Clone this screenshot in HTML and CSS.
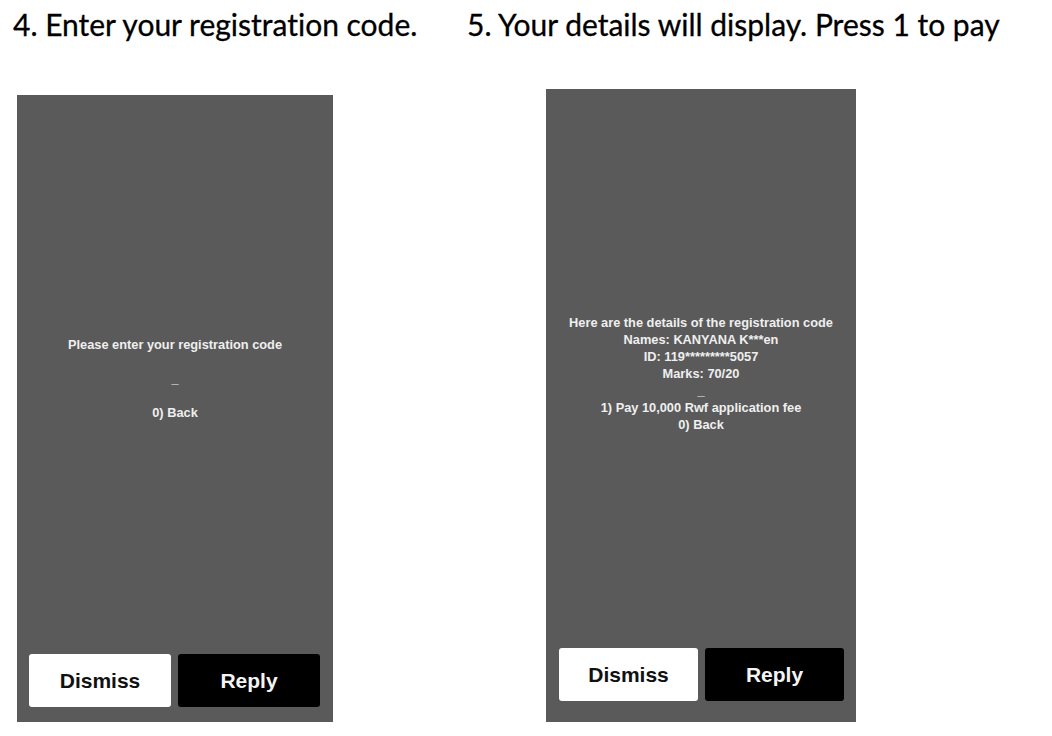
FILE: index.html
```html
<!DOCTYPE html>
<html>
<head>
<meta charset="utf-8">
<link rel="stylesheet" href="styles.css">
</head>
<body>
<div class="page">
  <div class="titles">
    <h1 class="title t1">4. Enter your registration code.</h1>
    <h1 class="title t2">5. Your details will display. Press 1 to pay</h1>
  </div>
  <div class="phones">
    <div class="phone phone-left">
      <div class="msg msg-left">
        <p>Please enter your registration code</p>
        <p>&nbsp;</p>
        <p>_</p>
        <p>&nbsp;</p>
        <p>0) Back</p>
      </div>
      <div class="actions actions-left">
        <button class="btn btn-dismiss">Dismiss</button>
        <button class="btn btn-reply">Reply</button>
      </div>
    </div>
    <div class="phone phone-right">
      <div class="msg msg-right">
        <p>Here are the details of the registration code</p>
        <p>Names: KANYANA K***en</p>
        <p>ID: 119*********5057</p>
        <p>Marks: 70/20</p>
        <p>_</p>
        <p>1) Pay 10,000 Rwf application fee</p>
        <p>0) Back</p>
      </div>
      <div class="actions actions-right">
        <button class="btn btn-dismiss">Dismiss</button>
        <button class="btn btn-reply">Reply</button>
      </div>
    </div>
  </div>
</div>
</body>
</html>
```

FILE: styles.css
```css
html, body {
  margin: 0;
  padding: 0;
  background: #ffffff;
}

.page {
  width: 1052px;
  height: 736px;
  position: relative;
  overflow: hidden;
}

.titles {
  display: flex;
  padding-left: 13px;
  padding-top: 6px;
  height: 89px;
  box-sizing: border-box;
}

.title {
  margin: 0;
  font-family: "Lato", "Liberation Sans", sans-serif;
  font-weight: 400;
  font-size: 30px;
  line-height: 37px;
  color: #000;
  white-space: nowrap;
  font-variant-ligatures: none;
  -webkit-text-stroke: 0.3px #000;
}

.t1 {
  width: 454px;
}

.phones {
  display: flex;
  align-items: flex-end;
  padding-left: 17px;
  gap: 213px;
}

.phone {
  background: #5a5a5a;
  display: flex;
  flex-direction: column;
  box-sizing: border-box;
}

.phone-left {
  width: 316px;
  height: 627px;
}

.phone-right {
  width: 310px;
  height: 633px;
}

.msg {
  flex: 1;
  color: #efefef;
  font-family: "Liberation Sans", Arial, sans-serif;
  font-weight: 700;
  font-size: 12.8px;
  line-height: 17px;
  text-align: center;
}

.msg p {
  margin: 0;
}

.msg-left {
  padding-top: 241px;
}

.msg-right {
  padding-top: 225px;
}

.actions {
  display: flex;
  gap: 7px;
}

.actions-left {
  padding: 0 13px 15px 12px;
}

.actions-right {
  padding: 0 12px 21px 13px;
}

.btn {
  flex: 1;
  height: 53px;
  border: none;
  border-radius: 3px;
  font-family: "Liberation Sans", Arial, sans-serif;
  font-weight: 700;
  font-size: 21px;
  padding: 0;
}

.btn-dismiss {
  background: #ffffff;
  color: #111;
}

.btn-reply {
  background: #000000;
  color: #f4f4f4;
}
```
